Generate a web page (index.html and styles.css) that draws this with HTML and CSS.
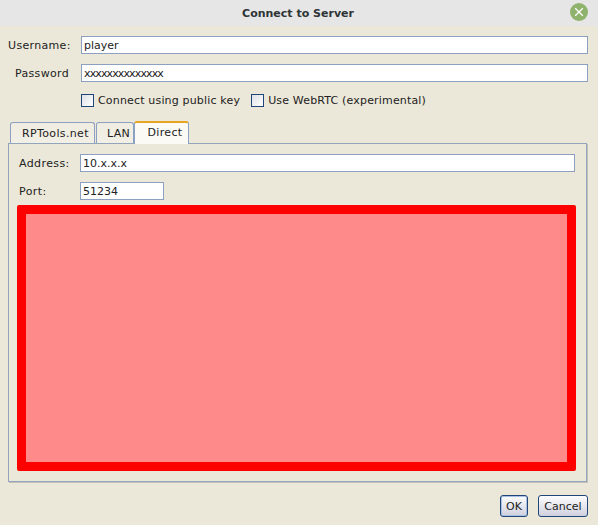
FILE: index.html
```html
<!DOCTYPE html>
<html lang="en">
<head>
  <meta charset="UTF-8" />
  <meta name="viewport" content="width=device-width, initial-scale=1.0"/>
  <title>Connect to Server</title>
  <link rel="stylesheet" href="styles.css">
</head>
<body>
  <div class="dialog">

    <!-- Title bar -->
    <header class="titlebar">
      <h1>Connect to Server</h1>
      <button class="close" aria-label="Close">
        <svg viewBox="0 0 18 18" width="18" height="18">
          <circle cx="9" cy="9" r="9" fill="#8fb26d"/>
          <path d="M5.2 5.2 L12.8 12.8 M12.8 5.2 L5.2 12.8" stroke="#fff" stroke-width="1.3" fill="none"/>
        </svg>
      </button>
    </header>

    <main class="content">
      <!-- Credentials -->
      <div class="row row-user">
        <label class="user-label">Username:</label>
        <input type="text" class="field" value="player" />
      </div>
      <div class="row row-pass">
        <label class="user-label pass-label">Password</label>
        <input type="text" class="field pass-field" value="xxxxxxxxxxxxxx" />
      </div>
      <div class="checks">
        <label class="check"><span class="box"></span>Connect using public key</label>
        <label class="check"><span class="box"></span>Use WebRTC (experimental)</label>
      </div>

      <!-- Tabs -->
      <nav class="tabs">
        <span class="tab tab-rptools">RPTools.net</span>
        <span class="tab tab-lan">LAN</span>
        <span class="tab tab-direct">Direct</span>
      </nav>
      <section class="panel">
        <div class="row panel-row">
          <label class="panel-label">Address:</label>
          <input type="text" class="field address" value="10.x.x.x" />
        </div>
        <div class="row panel-row port-row">
          <label class="panel-label">Port:</label>
          <input type="text" class="field port" value="51234" />
        </div>
        <div class="redbox"></div>
      </section>

      <!-- Buttons -->
      <div class="actions">
        <button class="btn btn-ok">OK</button>
        <button class="btn btn-cancel">Cancel</button>
      </div>
    </main>

  </div>
</body>
</html>
```

FILE: styles.css
```css
html, body {
  margin: 0;
  padding: 0;
}

body {
  font-family: 'DejaVu Sans', sans-serif;
  font-size: 11px;
  color: #222;
  background-color: #ebe8d9;
}

.dialog {
  width: 598px;
  height: 525px;
  overflow: hidden;
  display: flex;
  flex-direction: column;
}

.titlebar {
  height: 26px;
  padding-right: 2px;
  background-color: #e6e6e6;
  display: flex;
  align-items: center;
  justify-content: center;
  position: relative;
}

.titlebar h1 {
  margin: 0;
  font-size: 11px;
  font-weight: bold;
  color: #2e3436;
}

.close {
  position: absolute;
  top: 3px;
  right: 10px;
  width: 18px;
  height: 18px;
  padding: 0;
  border: none;
  background: none;
  display: block;
}

.content {
  padding: 10px 10px 0 8px;
}

.row {
  display: flex;
  align-items: center;
}

.row-pass {
  margin-top: 10px;
}

.user-label {
  width: 73px;
  flex: none;
  letter-spacing: 0.33px;
}

.pass-label {
  padding-left: 7px;
  width: 66px;
}

.field {
  box-sizing: border-box;
  height: 18px;
  padding: 0 2px;
  border: 1px solid #8ca1c2;
  background: #fff;
  font-family: inherit;
  font-size: 11px;
  color: #222;
  flex: 1;
  min-width: 0;
  outline: none;
}

.pass-field {
  letter-spacing: -0.87px;
}

.checks {
  display: flex;
  gap: 11px;
  margin: 12px 0 0 73px;
  letter-spacing: 0.17px;
}

.check {
  display: flex;
  align-items: center;
  gap: 4px;
}

.box {
  box-sizing: border-box;
  width: 13px;
  height: 13px;
  border: 1px solid #1f4579;
  background: linear-gradient(135deg, #dfe1e6, #fff);
}

.tabs {
  display: flex;
  align-items: flex-end;
  height: 24px;
  margin: 12px 0 0 2px;
}

.tab {
  box-sizing: border-box;
  height: 21px;
  border: 1px solid #8ca1c2;
  border-bottom: none;
  border-radius: 3px 3px 0 0;
  background: linear-gradient(#efece1, #f2efe6);
  display: flex;
  align-items: center;
  justify-content: center;
  margin-right: 1px;
  letter-spacing: 0.35px;
}

.tab-rptools { width: 85px; padding-left: 6px; }
.tab-lan { width: 38px; margin-right: 0; padding-left: 7px; }

.tab-direct {
  width: 55px;
  height: 23px;
  margin-right: 0;
  border-top: 2px solid #e8a521;
  background: #fbfaf5;
  padding: 0 0 3px 7px;
  position: relative;
  top: 1px;
  z-index: 1;
}

.panel {
  box-sizing: border-box;
  width: 579px;
  height: 339px;
  padding: 10px 10px 0 8px;
  border: 1px solid #93a4bd;
  box-shadow: 1px 1px 0 #c2c2b8;
}

.panel-label {
  width: 61px;
  flex: none;
  padding-left: 2px;
  letter-spacing: 0.4px;
}

.address {
  flex: none;
  width: 495px;
}

.port-row {
  margin-top: 10px;
}

.port {
  flex: none;
  width: 84px;
}

.redbox {
  box-sizing: border-box;
  width: 559px;
  height: 266px;
  margin-top: 5px;
  border: 9px solid #ff0000;
  border-radius: 2px;
  background: #ff8a8a;
}

.actions {
  display: flex;
  justify-content: flex-end;
  gap: 10px;
  margin-top: 13px;
}

.btn {
  box-sizing: border-box;
  height: 22px;
  padding: 0;
  border: 1px solid #1f4579;
  border-radius: 3px;
  background: linear-gradient(#fdfdfe, #cfd0de);
  font-family: inherit;
  font-size: 11px;
  color: #222;
}

.btn-ok {
  width: 28px;
  box-shadow: inset 0 0 0 1px #a9c0e2;
}

.btn-cancel {
  width: 50px;
}
```
